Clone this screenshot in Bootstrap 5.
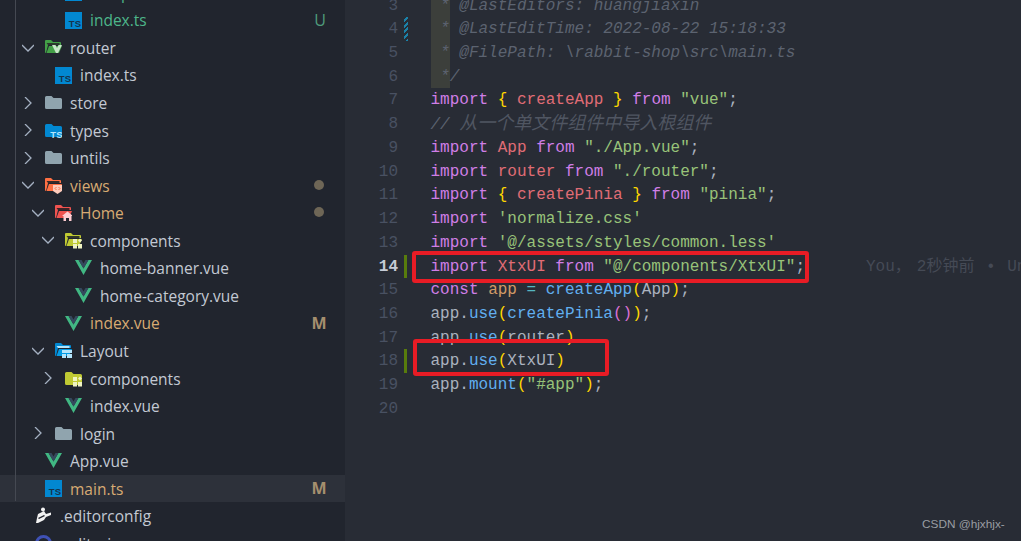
<!DOCTYPE html>
<html lang="en">
<head>
<meta charset="utf-8">
<title>main.ts</title>
<link href="https://cdn.jsdelivr.net/npm/bootstrap@5.3.0/dist/css/bootstrap.min.css" rel="stylesheet">
<style>
html,body{height:541px;overflow:hidden;background:#282c35}
.ide{height:541px;position:relative;overflow:hidden}
.side{width:345px;flex:none;background:#21252e;overflow:hidden;position:relative;font-family:"Open Sans","Noto Sans",sans-serif;font-size:15.5px}
.tree{margin-top:-21.3px}
.rw{height:27.55px;color:#c3c9d3;white-space:nowrap;position:relative}
.rw>span:first-of-type{padding-top:2px}
.rw.cur{background:#2d313a}
.rw.mod{color:#d8ab73}
.rw.new{color:#4db68a}
.d-1{padding-left:35px}.d0{padding-left:45px}.d1{padding-left:55px}.d2{padding-left:65px}.d3{padding-left:75px}
.fic{width:17px;height:17px;flex:none;margin-right:8px}
.chv{width:12px;height:12px;flex:none;position:absolute;margin-left:-23px;fill:none;stroke:#a4b0c1;stroke-width:1.3}
.tag{position:absolute;left:311px;width:16px;text-align:center;font-weight:700;font-size:16px}
.tag.m{color:#a58f6e}.tag.u{color:#4f9c7c;font-weight:400;left:312px}
.dotm{position:absolute;left:314px;width:10px;height:10px;border-radius:50%;background:#6e6656;margin-top:-1px}
.guide{position:absolute;left:15px;top:0;width:1px;height:501px;background:#454952;z-index:2}
.edit{flex:1;min-width:0;overflow:hidden;font-family:"Liberation Mono",monospace;font-size:16px;color:#abb2bf}
.code{margin-top:-6.4px}
.ln{height:23.72px;line-height:24.7px;white-space:pre}
.nm{width:53px;text-align:right;color:#495162;flex:none}
.ln.act .nm{color:#c6ccd7;font-weight:700}
.mk{width:32.5px;flex:none;padding-left:6px;height:23.72px}
.mk i{display:block;width:4px;height:100%}
.mk i.g{background:#587c0c;width:3px}
.mk i.h{background:repeating-linear-gradient(-45deg,#1b81a8 0 2px,#282c35 2px 4px)}
.k{color:#d07ee6}.v{color:#e06c75}.s{color:#98c379}.c{color:#5c6370;font-style:italic}.b{color:#ffd700}.p{color:#da70d6}.f{color:#61afef}.o{color:#d19a66}.q{color:#56b6c2}
.gd{background:#3c3f3b;display:inline-block;height:23.72px;vertical-align:top}
.cj{font-family:"Noto Sans CJK SC",sans-serif;font-size:18px;font-style:italic;line-height:1;color:#505662}
.ghost{color:#454a55;margin-left:61px}
.ghost .cj{font-style:normal;font-size:16px;color:#454a55}
.ghost .wide{padding-right:6px}
.ghost .sep{padding:0 2px}
.rbox{position:absolute;border:4px solid #e81c25;border-radius:3px}
.rb1{left:412px;top:251px;width:397px;height:32px}
.rb2{left:413px;top:339px;width:196px;height:37px}
.wm{position:absolute;left:922px;top:517px;font:11.8px "Liberation Sans",sans-serif;color:#9a9da3}
</style>
</head>
<body>
<svg width="0" height="0" class="position-absolute">
<defs>
<symbol id="ts" viewBox="0 0 17 17"><rect width="17" height="17" fill="#0288d1"/><text x="16" y="15" text-anchor="end" font-family="Liberation Sans" font-weight="700" font-size="9.5" fill="#14344d">TS</text></symbol>
<symbol id="vue" viewBox="0 0 17 17"><path d="M0 1h3.6L8.5 9.6 13.4 1H17L8.5 16z" fill="#41b883"/><path d="M3.6 1h2.9l2 3.6 2-3.6h2.9L8.5 9.6z" fill="#35495e"/></symbol>
<symbol id="fg" viewBox="0 0 17 17"><path d="M1.5 2h5l2 2h7A1.5 1.5 0 0 1 17 5.500v8A1.500 1.500 0 0 1 15.500 15h-14A1.500 1.500 0 0 1 0 13.500v-10A1.500 1.500 0 0 1 1.500 2z" fill="#90a4ae"/></symbol>
</defs>
</svg>
<div class="ide d-flex">
  <aside class="side">
    <div class="guide"></div>
    <div class="tree">
      <div class="rw new d-flex align-items-center d2"><svg class="fic"><use href="#ts"/></svg><span>comp</span></div>
      <div class="rw new d-flex align-items-center d2"><svg class="fic"><use href="#ts"/></svg><span>index.ts</span><span class="tag u">U</span></div>
      <div class="rw d-flex align-items-center d0"><svg class="chv" viewBox="0 0 12 12"><path d="M0 3l6 6 6-6"/></svg><svg class="fic" viewBox="0 0 17 17"><path d="M1 1h5l2 2h7a1 1 0 0 1 1 1v2H3L1 14a1 1 0 0 1-1-1V2a1 1 0 0 1 1-1z" fill="#43a047"/><path d="M1.500 4h13v2H3z" fill="#2b3a2c"/><path d="M4 7h13l-3 7H1.500z" fill="#43a047"/><path d="M7 6h3.500l1.500 3 1.500-3H17l-4 8h-2z" fill="#c8e6c9"/></svg><span>router</span></div>
      <div class="rw d-flex align-items-center d1"><svg class="fic"><use href="#ts"/></svg><span>index.ts</span></div>
      <div class="rw d-flex align-items-center d0"><svg class="chv" viewBox="0 0 12 12"><path d="M3 0l6 6-6 6"/></svg><svg class="fic"><use href="#fg"/></svg><span>store</span></div>
      <div class="rw d-flex align-items-center d0"><svg class="chv" viewBox="0 0 12 12"><path d="M3 0l6 6-6 6"/></svg><svg class="fic" viewBox="0 0 17 17"><path d="M1.500 2h5l2 2h7A1.500 1.500 0 0 1 17 5.500v8A1.500 1.500 0 0 1 15.500 15h-14A1.500 1.500 0 0 1 0 13.500v-10A1.500 1.500 0 0 1 1.500 2z" fill="#0288d1"/><text x="17.500" y="16" text-anchor="end" font-family="Liberation Sans" font-weight="700" font-size="9.500" fill="#b3e5fc">TS</text></svg><span>types</span></div>
      <div class="rw d-flex align-items-center d0"><svg class="chv" viewBox="0 0 12 12"><path d="M3 0l6 6-6 6"/></svg><svg class="fic"><use href="#fg"/></svg><span>untils</span></div>
      <div class="rw mod d-flex align-items-center d0"><svg class="chv" viewBox="0 0 12 12"><path d="M0 3l6 6 6-6"/></svg><svg class="fic" viewBox="0 0 17 17"><path d="M1 1h5l2 2h7a1 1 0 0 1 1 1v2H3L1 14a1 1 0 0 1-1-1V2a1 1 0 0 1 1-1z" fill="#ff7043"/><path d="M1.500 4h13v2H3z" fill="#3a2c28"/><path d="M4 7h13l-3 7H1.500z" fill="#ff7043"/><path d="M8 8h9v6l-4.500 3L8 14z" fill="#ffccbc"/><path d="M11.500 10l-1.500 1.500 1.500 1.500M13.500 10l1.500 1.500-1.500 1.500" fill="none" stroke="#ff7043"/></svg><span>views</span><span class="dotm"></span></div>
      <div class="rw mod d-flex align-items-center d1"><svg class="chv" viewBox="0 0 12 12"><path d="M0 3l6 6 6-6"/></svg><svg class="fic" viewBox="0 0 17 17"><path d="M1 1h5l2 2h7a1 1 0 0 1 1 1v2H3L1 14a1 1 0 0 1-1-1V2a1 1 0 0 1 1-1z" fill="#ef5350"/><path d="M1.500 4h13v2H3z" fill="#3a2528"/><path d="M4 7h13l-3 7H1.500z" fill="#ef5350"/><path d="M12.500 7.500L18 12h-1.500v5h-2.500v-3h-3v3H8.500v-5H7z" fill="#ffcdd2"/></svg><span>Home</span><span class="dotm"></span></div>
      <div class="rw d-flex align-items-center d2"><svg class="chv" viewBox="0 0 12 12"><path d="M0 3l6 6 6-6"/></svg><svg class="fic" viewBox="0 0 17 17"><path d="M1 1h5l2 2h7a1 1 0 0 1 1 1v2H3L1 14a1 1 0 0 1-1-1V2a1 1 0 0 1 1-1z" fill="#c0ca33"/><path d="M1.500 4h13v2H3z" fill="#333826"/><path d="M4 7h13l-3 7H1.500z" fill="#c0ca33"/><rect x="8" y="7" width="4" height="4" fill="#f0f4c3"/><path d="M15 6.500l2 2-2 2-2-2z" fill="#f0f4c3"/><rect x="8" y="12" width="4" height="4.500" fill="#f0f4c3"/><rect x="13" y="12" width="4" height="4.500" fill="#f0f4c3"/></svg><span>components</span></div>
      <div class="rw d-flex align-items-center d3"><svg class="fic"><use href="#vue"/></svg><span>home-banner.vue</span></div>
      <div class="rw d-flex align-items-center d3"><svg class="fic"><use href="#vue"/></svg><span>home-category.vue</span></div>
      <div class="rw mod d-flex align-items-center d2"><svg class="fic"><use href="#vue"/></svg><span>index.vue</span><span class="tag m">M</span></div>
      <div class="rw d-flex align-items-center d1"><svg class="chv" viewBox="0 0 12 12"><path d="M0 3l6 6 6-6"/></svg><svg class="fic" viewBox="0 0 17 17"><path d="M1 1h5l2 2h7a1 1 0 0 1 1 1v2H3L1 14a1 1 0 0 1-1-1V2a1 1 0 0 1 1-1z" fill="#0288d1"/><path d="M1.500 4h13v2H3z" fill="#b3e5fc"/><path d="M4 7h13l-3 7H1.500z" fill="#039be5"/><rect x="7" y="8" width="10" height="3" fill="#b3e5fc"/><rect x="7" y="12" width="4" height="4" fill="#b3e5fc"/><rect x="12" y="12" width="5" height="4" fill="#b3e5fc"/></svg><span>Layout</span></div>
      <div class="rw d-flex align-items-center d2"><svg class="chv" viewBox="0 0 12 12"><path d="M3 0l6 6-6 6"/></svg><svg class="fic" viewBox="0 0 17 17"><path d="M1.500 2h5l2 2h7A1.500 1.500 0 0 1 17 5.500v8A1.500 1.500 0 0 1 15.500 15h-14A1.500 1.500 0 0 1 0 13.500v-10A1.500 1.500 0 0 1 1.500 2z" fill="#c0ca33"/><rect x="8" y="7" width="4" height="4" fill="#f0f4c3"/><path d="M15 6.500l2 2-2 2-2-2z" fill="#f0f4c3"/><rect x="8" y="12" width="4" height="4.500" fill="#f0f4c3"/><rect x="13" y="12" width="4" height="4.500" fill="#f0f4c3"/></svg><span>components</span></div>
      <div class="rw d-flex align-items-center d2"><svg class="fic"><use href="#vue"/></svg><span>index.vue</span></div>
      <div class="rw d-flex align-items-center d1"><svg class="chv" viewBox="0 0 12 12"><path d="M3 0l6 6-6 6"/></svg><svg class="fic"><use href="#fg"/></svg><span>login</span></div>
      <div class="rw d-flex align-items-center d0"><svg class="fic"><use href="#vue"/></svg><span>App.vue</span></div>
      <div class="rw cur mod d-flex align-items-center d0"><svg class="fic"><use href="#ts"/></svg><span>main.ts</span><span class="tag m">M</span></div>
      <div class="rw d-flex align-items-center d-1"><svg class="fic" viewBox="0 0 17 17"><circle cx="8" cy="2.500" r="2" fill="#f2f2f2"/><path d="M3 7l6-3 2 3 5-1.500V8l-5 2-2 3-6 3H1l1-5z" fill="#f2f2f2"/><path d="M3 11l6-3 1 1-6 3z" fill="#21252e"/></svg><span>.editorconfig</span></div>
      <div class="rw d-flex align-items-center d-1"><svg class="fic" viewBox="0 0 17 17"><circle cx="8.500" cy="8.500" r="7" fill="none" stroke="#3f51b5" stroke-width="3"/></svg><span>.editorignore</span></div>
    </div>
  </aside>
  <main class="edit">
    <div class="code">
      <div class="ln d-flex"><span class="nm">3</span><span class="mk"></span><span><span class="c"><span class="gd"> *</span> @LastEditors: huangjiaxin</span></span></div>
      <div class="ln d-flex"><span class="nm">4</span><span class="mk"><i class="h"></i></span><span><span class="c"><span class="gd"> *</span> @LastEditTime: 2022-08-22 15:18:33</span></span></div>
      <div class="ln d-flex"><span class="nm">5</span><span class="mk"></span><span><span class="c"><span class="gd"> *</span> @FilePath: \rabbit-shop\src\main.ts</span></span></div>
      <div class="ln d-flex"><span class="nm">6</span><span class="mk"></span><span><span class="c"><span class="gd"> *</span>/</span></span></div>
      <div class="ln d-flex"><span class="nm">7</span><span class="mk"></span><span><span class="k">import</span> <span class="b">{</span> <span class="v">createApp</span> <span class="b">}</span> <span class="k">from</span> <span class="s">"vue"</span>;</span></div>
      <div class="ln d-flex"><span class="nm">8</span><span class="mk"></span><span class="c">// <span class="cj">从一个单文件组件中导入根组件</span></span></div>
      <div class="ln d-flex"><span class="nm">9</span><span class="mk"></span><span><span class="k">import</span> <span class="v">App</span> <span class="k">from</span> <span class="s">"./App.vue"</span>;</span></div>
      <div class="ln d-flex"><span class="nm">10</span><span class="mk"></span><span><span class="k">import</span> <span class="v">router</span> <span class="k">from</span> <span class="s">"./router"</span>;</span></div>
      <div class="ln d-flex"><span class="nm">11</span><span class="mk"></span><span><span class="k">import</span> <span class="b">{</span> <span class="v">createPinia</span> <span class="b">}</span> <span class="k">from</span> <span class="s">"pinia"</span>;</span></div>
      <div class="ln d-flex"><span class="nm">12</span><span class="mk"></span><span><span class="k">import</span> <span class="s">'normalize.css'</span></span></div>
      <div class="ln d-flex"><span class="nm">13</span><span class="mk"></span><span><span class="k">import</span> <span class="s">'@/assets/styles/common.less'</span></span></div>
      <div class="ln act d-flex"><span class="nm">14</span><span class="mk"><i class="g"></i></span><span><span class="k">import</span> <span class="v">XtxUI</span> <span class="k">from</span> <span class="s">"@/components/XtxUI"</span>;<span class="ghost">You<span class="cj wide">，</span>2<span class="cj">秒钟前</span><span class="sep"> • </span>Un</span></span></div>
      <div class="ln d-flex"><span class="nm">15</span><span class="mk"></span><span><span class="k">const</span> <span class="o">app</span> <span class="q">=</span> <span class="f">createApp</span><span class="b">(</span>App<span class="b">)</span>;</span></div>
      <div class="ln d-flex"><span class="nm">16</span><span class="mk"></span><span>app.<span class="f">use</span><span class="b">(</span><span class="f">createPinia</span><span class="p">()</span><span class="b">)</span>;</span></div>
      <div class="ln d-flex"><span class="nm">17</span><span class="mk"></span><span>app.<span class="f">use</span><span class="b">(</span>router<span class="b">)</span></span></div>
      <div class="ln d-flex"><span class="nm">18</span><span class="mk"><i class="g"></i></span><span>app.<span class="f">use</span><span class="b">(</span>XtxUI<span class="b">)</span></span></div>
      <div class="ln d-flex"><span class="nm">19</span><span class="mk"></span><span>app.<span class="f">mount</span><span class="b">(</span><span class="s">"#app"</span><span class="b">)</span>;</span></div>
      <div class="ln d-flex"><span class="nm">20</span><span class="mk"></span><span></span></div>
    </div>
  </main>
  <div class="rbox rb1"></div>
  <div class="rbox rb2"></div>
  <div class="wm">CSDN @hjxhjx-</div>
</div>
<script src="https://cdn.jsdelivr.net/npm/bootstrap@5.3.0/dist/js/bootstrap.bundle.min.js"></script>
</body>
</html>
